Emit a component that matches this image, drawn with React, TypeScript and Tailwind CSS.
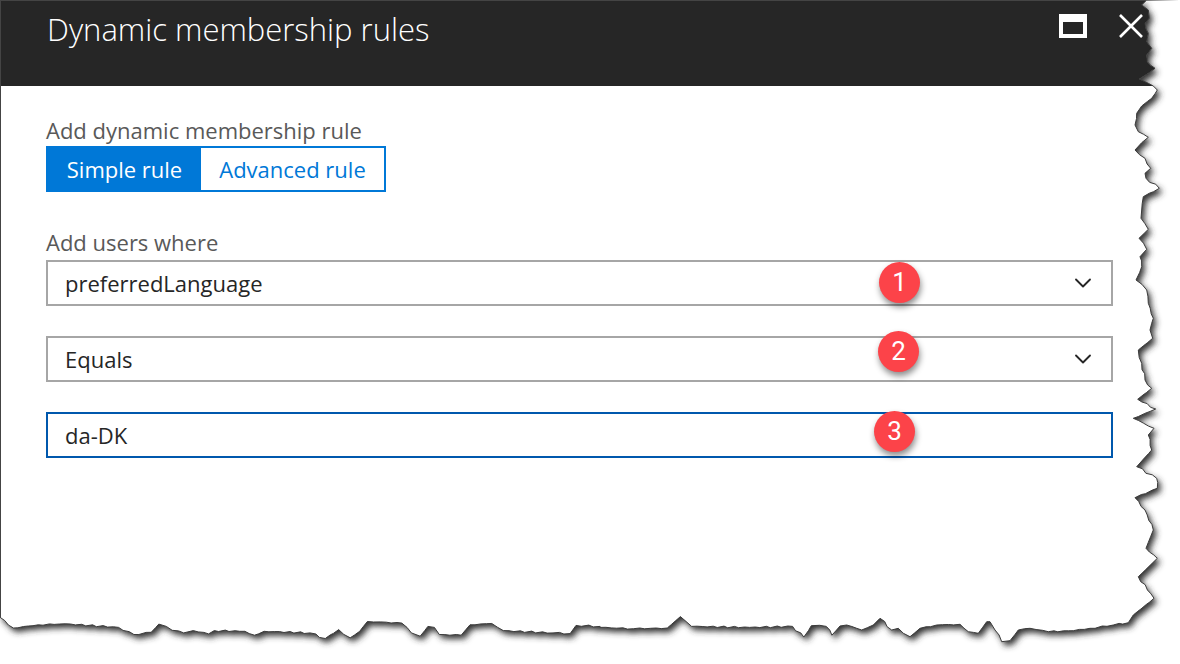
import { ChevronDown } from "lucide-react";

// torn edge, read off the zoomed crops: [x, y] in crop pixels
const rightTop = [[918,2],[905,15],[925,30],[928,55],[915,70],[925,100],[920,125],[935,145],[920,165],[922,185],[945,205],[925,220],[898,237],[925,250],[952,270],[935,295],[905,318],[890,340],[885,375],[895,395],[925,412],[905,428],[885,450],[915,475],[932,505],[915,520],[918,535],[958,565],[910,590],[905,630],[903,655],[925,688],[897,715],[920,748],[900,770],[905,800],[888,840],[920,870],[925,910],[940,955]];
const rightBottom = [[935,10],[930,30],[938,55],[895,90],[905,130],[915,180],[935,205],[893,238],[947,267],[880,295],[942,325],[925,345],[935,390],[890,440],[950,475],[952,505],[885,533],[915,570],[940,630],[918,685],[952,715],[895,770],[942,835],[880,885],[865,908],[820,915],[750,925],[700,932],[625,935],[570,925],[535,930],[510,962],[485,965],[465,930],[450,905],[440,905],[415,940],[385,935],[360,913],[290,915],[240,925],[210,950],[175,925],[155,930],[120,895],[100,915],[65,930],[20,915],[0,918]];
const bottomMid = [[620,292],[605,265],[565,263],[545,298],[515,265],[400,268],[245,265],[215,235],[180,270],[90,272],[0,268]];
const bottomLeft = [[1568,265],[1505,262],[1490,287],[1445,285],[1315,278],[1285,256],[1228,260],[1205,292],[1148,290],[1135,268],[1118,265],[1098,295],[1075,285],[1050,255],[1010,252],[960,250],[940,280],[915,300],[885,275],[850,302],[810,285],[690,280],[665,292],[640,280],[560,278],[545,288],[505,278],[480,285],[450,277],[415,258],[395,283],[350,290],[310,268],[170,257],[100,260],[35,270],[0,237]];

const coarse = [
    ...rightTop.map(([x, y]) => [840 + x / 3, y / 3]),
    ...rightBottom.map(([x, y]) => [840 + x / 3, 320 + y / 3]),
    ...bottomMid.map(([x, y]) => [600 + x * 0.374, 540 + y * 0.326]),
    ...bottomLeft.map(([x, y]) => [x * 0.3827, 540 + y * 0.326]),
];

// roughen the line between the points a little
const tear: number[][] = [];
coarse.forEach((p, i) => {
    tear.push(p);
    const next = coarse[i + 1];
    if (!next) return;
    const steps = Math.floor(Math.hypot(next[0] - p[0], next[1] - p[1]) / 5);
    for (let s = 1; s < steps; s++) {
        const t = s / steps;
        const wob = Math.sin(i * 12.9 + s * 78.2) * 0.8;
        tear.push([p[0] + (next[0] - p[0]) * t + wob, p[1] + (next[1] - p[1]) * t - wob]);
    }
});

const line = tear.map(([x, y]) => `${x.toFixed(1)},${y.toFixed(1)}`).join(" ");

const TornEdge = () => (
    <svg className="absolute inset-0 pointer-events-none" width="1180" height="664" viewBox="0 0 1180 664">
        <defs>
            <clipPath id="outside">
                <polygon points={`${line} 0,664 1180,664 1180,0`} />
            </clipPath>
            <filter id="soft" x="-5%" y="-5%" width="110%" height="110%">
                <feGaussianBlur stdDeviation="3" />
            </filter>
        </defs>
        <polygon points={`${line} 0,664 1180,664 1180,0`} fill="#ffffff" />
        <g clipPath="url(#outside)">
            <polygon points={`${line} 0,0`} fill="#333333" filter="url(#soft)" transform="translate(3 4)" />
        </g>
        <polyline points={line} fill="none" stroke="#3c3c3c" strokeWidth="1" />
    </svg>
);

const Badge = ({ n, className }: { n: number; className: string }) => (
    <div className={`absolute w-[41px] h-[41px] rounded-full bg-[#fc4349] text-white flex items-center justify-center text-[26px] shadow-[1px_4px_6px_rgba(0,0,0,0.45)] font-['Roboto',sans-serif] ${className}`}>
        {n}
    </div>
);

const Select = ({ value }: { value: string }) => (
    <div className="h-[46px] border-2 border-[#a6a6a6] flex items-center justify-between pl-[17px] pr-[14px] text-[#262626]">
        <span>{value}</span>
        <ChevronDown size={28} strokeWidth={1.6} className="text-[#262626]" />
    </div>
);

export default function App() {
    return (
        <div className="relative w-[1180px] h-[664px] overflow-hidden bg-white font-['Open_Sans',sans-serif] text-[22px]">
            <div className="h-full border-l border-[#444444] flex flex-col">
                {/* header */}
                <div className="h-[86px] shrink-0 bg-[#262626] border-t border-[#444444] flex items-start justify-between pl-[46px] pr-[37px] text-white">
                    <h1 className="text-[31px] font-light leading-[56px]">Dynamic membership rules</h1>
                    <div className="flex items-center gap-[32px] pt-[13px]">
                        <div className="w-[28px] h-[24px] border-[4px] border-t-[8px] border-white" />
                        <svg width="24" height="24" viewBox="0 0 24 24" fill="none" stroke="white" strokeWidth="2.6">
                            <path d="M1 1 L23 23 M23 1 L1 23" />
                        </svg>
                    </div>
                </div>

                {/* form */}
                <div className="pl-[45px] pr-[67px] pt-[29px]">
                    <div className="text-[#595959] leading-[30px] mb-[1px]">Add dynamic membership rule</div>
                    <div className="flex w-[340px] h-[46px] border-2 border-[#0078d7]">
                        <div className="w-[153px] bg-[#0078d7] text-white flex items-center justify-center">Simple rule</div>
                        <div className="flex-1 text-[#0078d7] flex items-center justify-center">Advanced rule</div>
                    </div>

                    <div className="text-[#595959] leading-[30px] mt-[35px] mb-[3px]">Add users where</div>
                    <div className="flex flex-col gap-[30px]">
                        <Select value="preferredLanguage" />
                        <Select value="Equals" />
                        <div className="h-[46px] border-2 border-[#0058ad] flex items-center pl-[17px] text-[#262626]">da-DK</div>
                    </div>
                </div>
            </div>

            <Badge n={1} className="left-[879px] top-[262px]" />
            <Badge n={2} className="left-[878px] top-[331px]" />
            <Badge n={3} className="left-[874px] top-[411px]" />

            <TornEdge />
        </div>
    );
}
